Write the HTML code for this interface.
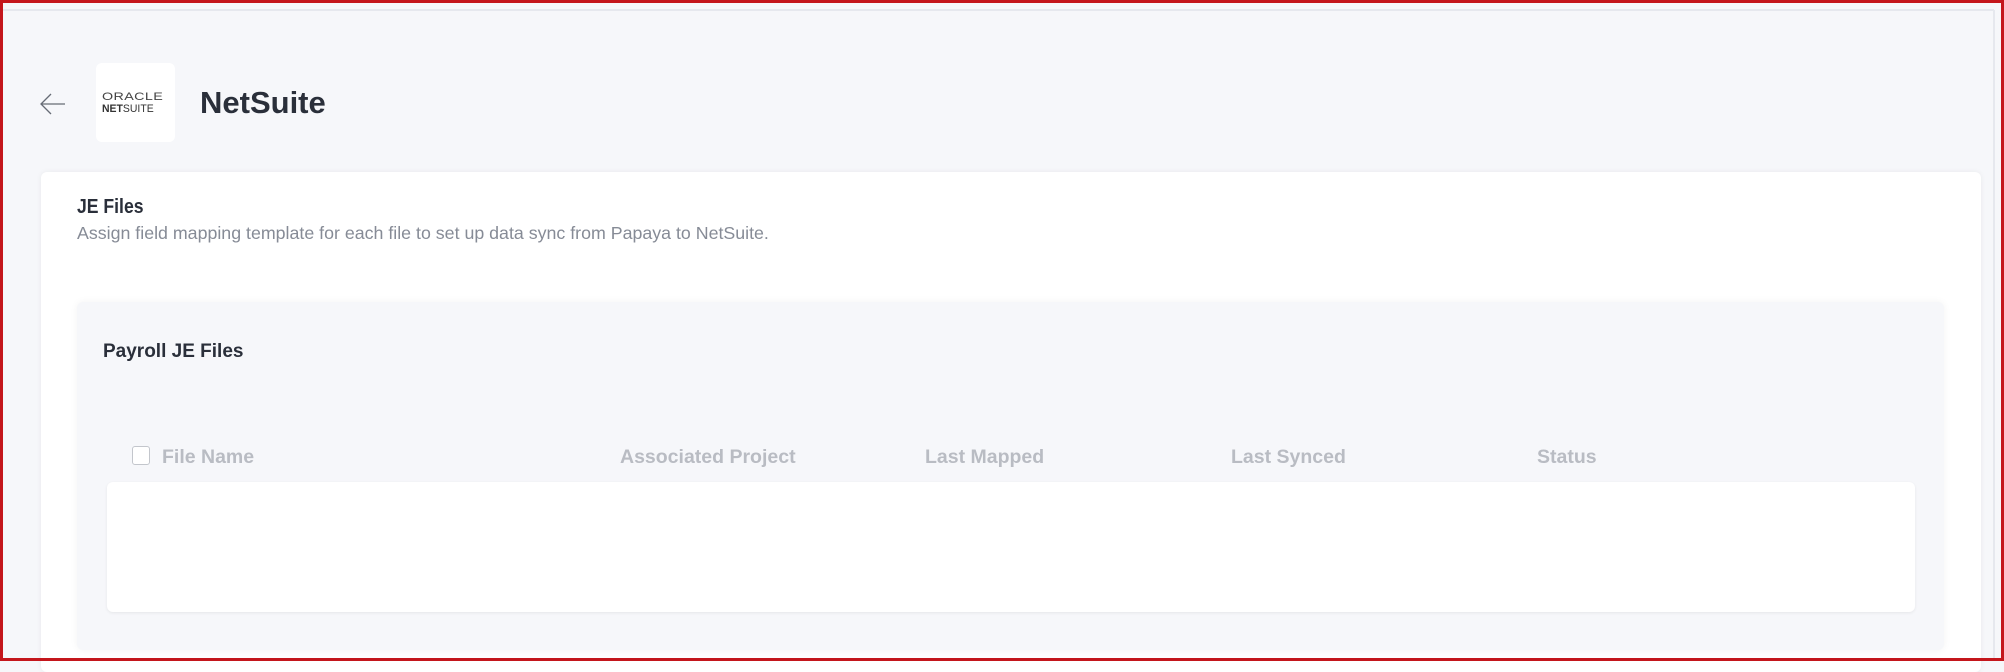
<!DOCTYPE html>
<html><head><meta charset="utf-8"><style>
*{margin:0;padding:0;box-sizing:border-box}
body{width:2004px;height:661px;overflow:hidden;background:#f6f7fa;font-family:"Liberation Sans",sans-serif;position:relative}
.frame{position:absolute;inset:0;border:3px solid #c4161c;pointer-events:none;z-index:10}
.topline{position:absolute;left:3px;right:10px;top:9px;height:2px;background:#e6e8ee}
.rightline{position:absolute;top:10px;bottom:0;left:1993px;width:2px;background:#e6e8ee}
.logo{position:absolute;left:96px;top:63px;width:79px;height:79px;background:#fff;border-radius:6px}
.logo .o{position:absolute;left:6px;top:28px;font-size:11px;letter-spacing:0.3px;color:#444;transform:scaleX(1.3);transform-origin:left}
.logo .n{position:absolute;left:6px;top:40px;font-size:11px;color:#333;transform:scaleX(0.95);transform-origin:left}
.title{position:absolute;left:200px;top:85px;font-size:31px;font-weight:bold;color:#2a2f3a}
.card{position:absolute;left:41px;top:172px;width:1940px;height:500px;background:#fff;border-radius:6px;box-shadow:0 0 6px rgba(0,0,0,0.06)}
.h1{position:absolute;left:77px;top:196px;font-size:20px;font-weight:bold;color:#2a2f3a;transform:scaleX(0.88);transform-origin:left}
.sub{position:absolute;left:77px;top:223px;font-size:17.8px;color:#868b96}
.panel{position:absolute;left:77px;top:302px;width:1867px;height:348px;background:#f6f7fa;border-radius:6px;box-shadow:0 0 8px rgba(0,0,0,0.05)}
.h2{position:absolute;left:103px;top:341px;font-size:19px;font-weight:bold;color:#2a2f3a}
.th{position:absolute;top:446px;font-size:19.5px;font-weight:bold;color:#b9bcc3}
.cb{position:absolute;left:132px;top:446px;width:18px;height:19px;border:1.5px solid #c3c6cc;border-radius:3px;background:#fff}
.table{position:absolute;left:107px;top:482px;width:1808px;height:130px;background:#fff;border-radius:6px;box-shadow:0 1px 3px rgba(0,0,0,0.07)}
</style></head><body>
<div class="topline"></div>
<div class="rightline"></div>
<svg style="position:absolute;left:39px;top:92px" width="28" height="24" viewBox="0 0 28 24"><path d="M26 12H2M12 2L2 12l10 10" fill="none" stroke="#666b75" stroke-width="1.3"/></svg>
<div class="logo"><div class="o">ORACLE</div><div class="n"><b>NET</b>SUITE</div></div>
<div class="title">NetSuite</div>
<div class="card"></div>
<div class="h1">JE Files</div>
<div class="sub">Assign field mapping template for each file to set up data sync from Papaya to NetSuite.</div>
<div class="panel"></div>
<div class="h2">Payroll JE Files</div>
<div class="cb"></div>
<div class="th" style="left:162px">File Name</div>
<div class="th" style="left:620px">Associated Project</div>
<div class="th" style="left:925px">Last Mapped</div>
<div class="th" style="left:1231px">Last Synced</div>
<div class="th" style="left:1537px">Status</div>
<div class="table"></div>
<div class="frame"></div>
</body></html>
